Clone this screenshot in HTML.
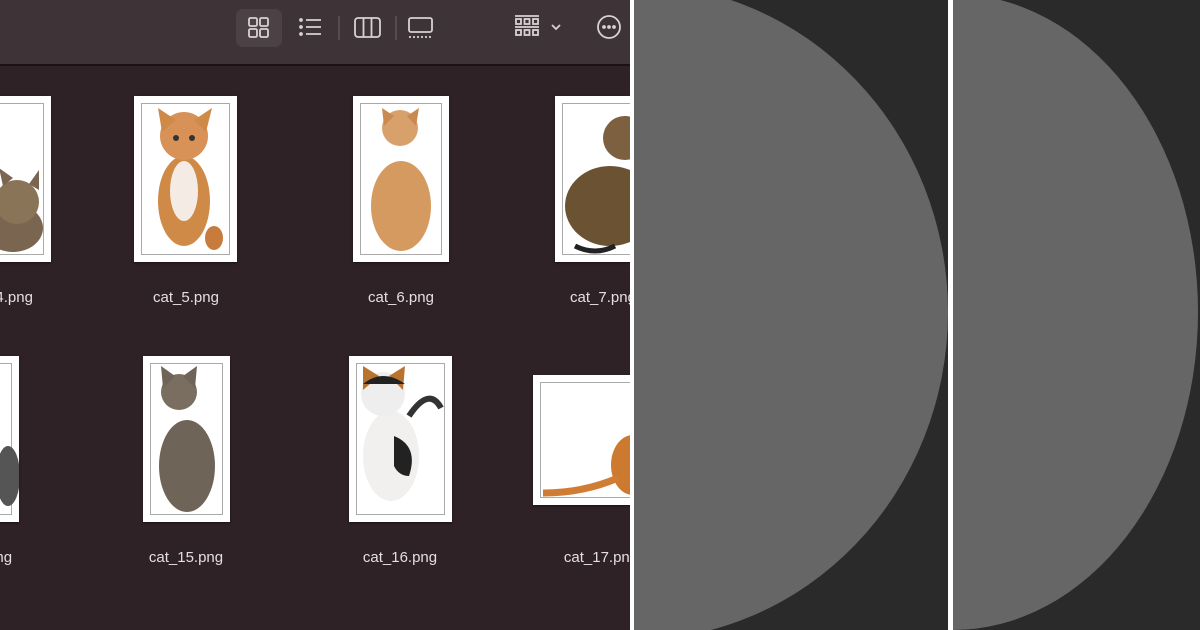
<!DOCTYPE html>
<html><head><meta charset="utf-8"><style>
body{margin:0;width:1200px;height:630px;overflow:hidden;background:#2a2a2a;position:relative;font-family:"Liberation Sans",sans-serif}
.finder{position:absolute;left:0;top:0;width:630px;height:630px;background:#2f2226;overflow:hidden}
.tb{position:absolute;left:0;top:0;width:630px;height:64px;background:#3e3438;border-bottom:2px solid #1a1214}
.card{position:absolute;background:#fff;box-shadow:0 1px 2px rgba(0,0,0,.5)}
.card .in{position:absolute;left:7px;top:7px;right:7px;bottom:7px;border:1px solid #aaa}
.card svg{position:absolute;left:0;top:0;width:100%;height:100%}
.lbl{position:absolute;color:#e4dfe0;font-size:15px;width:160px;text-align:center}
.div{position:absolute;top:0;height:630px;background:#fff}
</style></head><body>
<div class="finder">
<div class="tb">
<svg width="630" height="64" style="position:absolute;left:0;top:0" fill="none" stroke="#d8d2d4" stroke-width="1.8">
<rect x="236" y="9" width="46" height="38" rx="7" fill="#4c4246" stroke="none"/>
<rect x="249" y="18" width="8" height="8" rx="1.5"/><rect x="260" y="18" width="8" height="8" rx="1.5"/>
<rect x="249" y="29" width="8" height="8" rx="1.5"/><rect x="260" y="29" width="8" height="8" rx="1.5"/>
<circle cx="301" cy="20" r="1" fill="#d8d2d4"/><circle cx="301" cy="27" r="1" fill="#d8d2d4"/><circle cx="301" cy="34" r="1" fill="#d8d2d4"/>
<path d="M306 20h15M306 27h15M306 34h15"/>
<path d="M339 16v24" stroke="#5a5054"/>
<rect x="355" y="18" width="25" height="19" rx="3"/><path d="M363.5 18v19M371.5 18v19"/>
<path d="M396 16v24" stroke="#5a5054"/>
<rect x="409" y="18" width="23" height="14" rx="2"/><path d="M409 37h23" stroke-dasharray="2 2"/>
<path d="M515 16h24M515 27h24"/><rect x="516" y="19" width="5" height="5"/><rect x="524.5" y="19" width="5" height="5"/><rect x="533" y="19" width="5" height="5"/>
<rect x="516" y="30" width="5" height="5"/><rect x="524.5" y="30" width="5" height="5"/><rect x="533" y="30" width="5" height="5"/>
<path d="M552 25l4 4 4-4"/>
<circle cx="609" cy="27" r="11"/>
<circle cx="604" cy="27" r="1" fill="#d8d2d4"/><circle cx="609" cy="27" r="1" fill="#d8d2d4"/><circle cx="614" cy="27" r="1" fill="#d8d2d4"/>
</svg>
</div>

<div class="card" style="left:-45px;top:96px;width:96px;height:166px"><div class="in"></div>
<svg viewBox="0 0 96 166"><ellipse cx="58" cy="132" rx="30" ry="24" fill="#7a6650"/><circle cx="62" cy="106" r="22" fill="#8a7458"/><path d="M48 90l-4-18 14 10zM74 88l10-14 0 20z" fill="#7a6650"/></svg></div>
<div class="lbl" style="left:-80px;top:289px">cat_4.png</div>

<div class="card" style="left:134px;top:96px;width:103px;height:166px"><div class="in"></div>
<svg viewBox="0 0 103 166"><ellipse cx="50" cy="105" rx="26" ry="45" fill="#d08a48"/><ellipse cx="50" cy="95" rx="14" ry="30" fill="#f4ece4"/><circle cx="50" cy="40" r="24" fill="#d89258"/><path d="M28 36l-4-24 18 12zM72 36l6-24-18 12z" fill="#d08a48"/><ellipse cx="80" cy="142" rx="9" ry="12" fill="#c87c3c"/><circle cx="42" cy="42" r="3" fill="#333"/><circle cx="58" cy="42" r="3" fill="#333"/></svg></div>
<div class="lbl" style="left:106px;top:289px">cat_5.png</div>

<div class="card" style="left:353px;top:96px;width:96px;height:166px"><div class="in"></div>
<svg viewBox="0 0 96 166"><ellipse cx="48" cy="110" rx="30" ry="45" fill="#d49a60"/><circle cx="47" cy="32" r="18" fill="#d8a06a"/><path d="M31 30l-2-18 12 8zM63 30l3-18-12 8z" fill="#c98a50"/></svg></div>
<div class="lbl" style="left:321px;top:289px">cat_6.png</div>

<div class="card" style="left:555px;top:96px;width:96px;height:166px"><div class="in"></div>
<svg viewBox="0 0 96 166"><ellipse cx="55" cy="110" rx="45" ry="40" fill="#6b5232"/><circle cx="70" cy="42" r="22" fill="#7d6040"/><path d="M20 150q20 10 40 0" stroke="#222" stroke-width="5" fill="none"/></svg></div>
<div class="lbl" style="left:523px;top:289px">cat_7.png</div>

<div class="card" style="left:-70px;top:356px;width:89px;height:166px"><div class="in"></div>
<svg viewBox="0 0 89 166"><ellipse cx="78" cy="120" rx="12" ry="30" fill="#555"/></svg></div>
<div class="lbl" style="left:-105px;top:549px">cat_14.png</div>

<div class="card" style="left:143px;top:356px;width:87px;height:166px"><div class="in"></div>
<svg viewBox="0 0 87 166"><ellipse cx="44" cy="110" rx="28" ry="46" fill="#6e6458"/><circle cx="36" cy="36" r="18" fill="#7a6e60"/><path d="M20 32l-2-22 14 10zM52 32l2-22-14 10z" fill="#6e6458"/></svg></div>
<div class="lbl" style="left:106px;top:549px">cat_15.png</div>

<div class="card" style="left:349px;top:356px;width:103px;height:166px"><div class="in"></div>
<svg viewBox="0 0 103 166"><ellipse cx="42" cy="100" rx="28" ry="45" fill="#f2f0ee"/><path d="M45 80q25 10 15 40q-10 0-15-10z" fill="#222"/><circle cx="34" cy="38" r="22" fill="#eee"/><path d="M14 34l0-24 16 10zM54 34l2-24-16 10z" fill="#b8742e"/><path d="M14 28q20-16 42 0" fill="#222"/><path d="M60 60q20-30 32 -8" stroke="#333" stroke-width="6" fill="none"/></svg></div>
<div class="lbl" style="left:320px;top:549px">cat_16.png</div>

<div class="card" style="left:533px;top:375px;width:110px;height:130px"><div class="in"></div>
<svg viewBox="0 0 110 130"><ellipse cx="100" cy="90" rx="22" ry="30" fill="#cc7a30"/><path d="M10 118q40 0 75-15" stroke="#d07c34" stroke-width="7" fill="none"/></svg></div>
<div class="lbl" style="left:521px;top:549px">cat_17.png</div>
</div>

<div class="div" style="left:630px;width:4px"></div>
<svg width="314" height="630" style="position:absolute;left:634px;top:0"><ellipse cx="0" cy="312" rx="314" ry="328" fill="#666"/></svg>
<div class="div" style="left:948px;width:5px"></div>
<svg width="247" height="630" style="position:absolute;left:953px;top:0"><ellipse cx="0" cy="312" rx="245" ry="318" fill="#666"/></svg>
</body></html>
